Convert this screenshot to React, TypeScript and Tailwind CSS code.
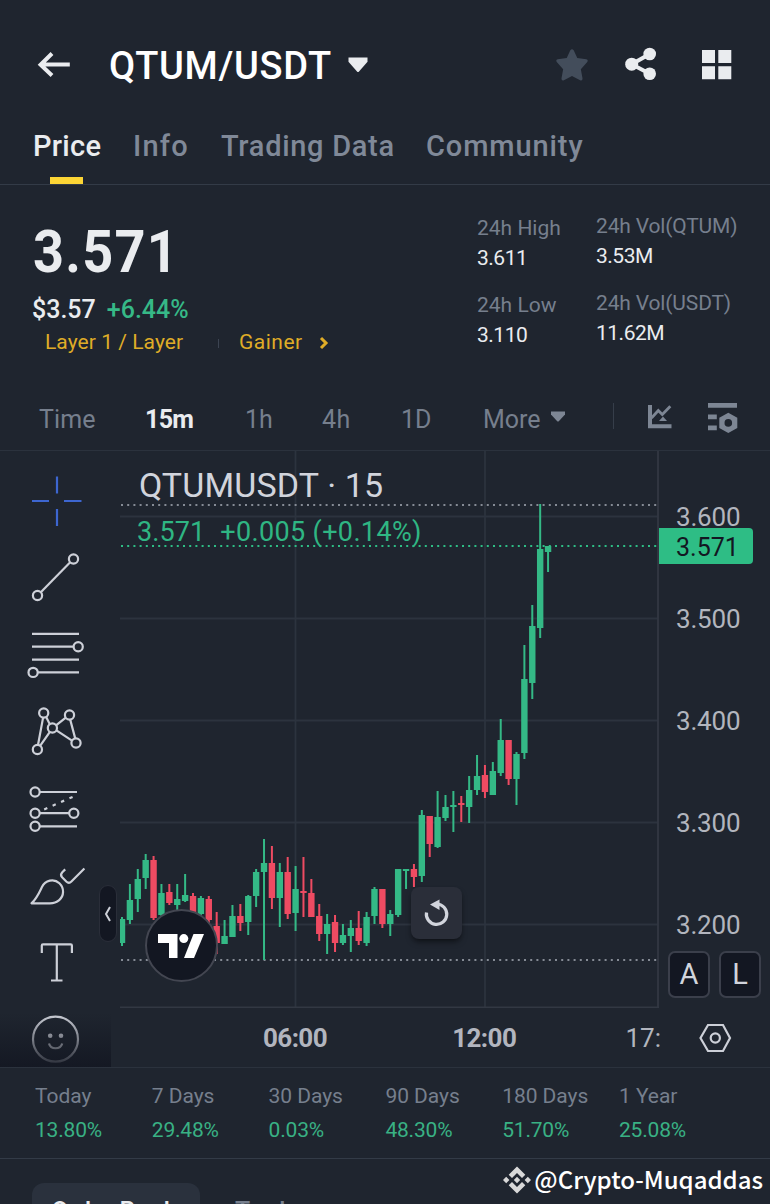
import { useState, type ReactNode } from "react";
import clsx from "clsx";

type Candle = [high: number, top: number, bottom: number, low: number, up: 0 | 1];

const tabs = [
  { name: "Price", className: "w-[100px] tracking-[0.3px]" },
  { name: "Info", className: "w-[88px] tracking-[1.2px]" },
  { name: "Trading Data", className: "w-[205px] tracking-[0.7px]" },
  { name: "Community", className: "w-[160px] tracking-[0.9px]" },
];

const intervals = [
  { name: "Time", className: "w-[106px] tracking-[0.1px]" },
  { name: "15m", className: "w-[100px] tracking-[-0.7px]" },
  { name: "1h", className: "w-[77px] tracking-[0px]" },
  { name: "4h", className: "w-[79px] tracking-[0.4px]" },
  { name: "1D", className: "w-[82px] tracking-[0px]" },
];

const stats = [
  [
    { label: "24h High", value: "3.611" },
    { label: "24h Low", value: "3.110" },
  ],
  [
    { label: "24h Vol(QTUM)", value: "3.53M" },
    { label: "24h Vol(USDT)", value: "11.62M" },
  ],
];

const performance = [
  { label: "Today", value: "13.80%" },
  { label: "7 Days", value: "29.48%" },
  { label: "30 Days", value: "0.03%" },
  { label: "90 Days", value: "48.30%" },
  { label: "180 Days", value: "51.70%" },
  { label: "1 Year", value: "25.08%" },
];

const priceLevels = ["3.600", "3.500", "3.400", "3.300", "3.200"];

const candles: Candle[] = [
  [917, 919, 943, 946, 1],
  [884, 900, 920, 924, 1],
  [869, 879, 899, 912, 1],
  [854, 860, 878, 889, 1],
  [856, 860, 918, 920, 0],
  [884, 893, 915, 930, 1],
  [884, 892, 903, 905, 0],
  [884, 899, 905, 910, 1],
  [874, 895, 901, 902, 1],
  [893, 896, 915, 925, 0],
  [896, 898, 914, 930, 1],
  [896, 899, 920, 930, 0],
  [912, 926, 943, 954, 0],
  [920, 936, 944, 944, 1],
  [905, 916, 937, 937, 1],
  [904, 916, 923, 931, 0],
  [895, 896, 922, 935, 1],
  [869, 872, 896, 907, 1],
  [839, 863, 872, 960, 1],
  [846, 863, 898, 909, 0],
  [863, 872, 898, 927, 1],
  [857, 872, 914, 919, 0],
  [866, 889, 913, 931, 1],
  [857, 891, 893, 917, 0],
  [879, 893, 917, 917, 0],
  [904, 916, 934, 941, 0],
  [914, 924, 934, 954, 1],
  [915, 922, 943, 952, 0],
  [924, 935, 943, 945, 1],
  [920, 928, 936, 952, 1],
  [911, 928, 941, 945, 0],
  [912, 917, 943, 946, 1],
  [887, 889, 916, 924, 1],
  [889, 889, 924, 928, 0],
  [910, 914, 924, 936, 1],
  [869, 869, 915, 917, 1],
  [869, 869, 871, 889, 1],
  [864, 869, 877, 887, 0],
  [810, 815, 876, 882, 1],
  [816, 816, 844, 857, 0],
  [791, 817, 847, 848, 1],
  [795, 807, 818, 821, 1],
  [791, 805, 807, 832, 1],
  [796, 803, 805, 822, 0],
  [776, 790, 807, 823, 1],
  [755, 776, 790, 795, 1],
  [765, 775, 792, 798, 0],
  [762, 771, 795, 795, 1],
  [719, 740, 773, 776, 1],
  [740, 740, 779, 785, 0],
  [752, 754, 779, 805, 1],
  [645, 679, 753, 759, 1],
  [605, 626, 683, 699, 1],
  [504, 549, 628, 638, 1],
  [546, 546, 552, 572, 1],
];

const tools: Array<{ name: string; icon: ReactNode }> = [
  {
    name: "Crosshair",
    icon: <path stroke="#3d66d0" d="M57 13.5v17M57 46v17M32 38h17M64 38h17.5" />,
  },
  {
    name: "Trend line",
    icon: (
      <>
        <circle cx="73.5" cy="19" r="4.6" />
        <circle cx="37.5" cy="55.5" r="4.6" />
        <path d="M70.2 22.3 40.8 52.2" />
      </>
    ),
  },
  {
    name: "Fib retracement",
    icon: (
      <>
        <path d="M32 16.8h47M32 29.7h41.5M32 42.6h47M37.7 55.4H79" />
        <circle cx="78.2" cy="29.7" r="4.6" />
        <circle cx="33.1" cy="55.4" r="4.6" />
      </>
    ),
  },
  {
    name: "Pattern",
    icon: (
      <>
        <circle cx="43.7" cy="19" r="4.6" />
        <circle cx="69.5" cy="21" r="4.6" />
        <circle cx="52.4" cy="34" r="4.6" />
        <circle cx="37.4" cy="55.5" r="4.6" />
        <circle cx="76" cy="49" r="4.6" />
        <path d="M43.1 23.6 38 51M46.2 22.9l3.6 7.3M65.8 23.6 56 31.4M49.9 37.9 40.1 51.8M56.4 36.4 72 46.6M70.2 25.6l5 18.8" />
      </>
    ),
  },
  {
    name: "Forecast",
    icon: (
      <>
        <circle cx="35.1" cy="21" r="4.6" />
        <circle cx="35.1" cy="42.2" r="4.6" />
        <circle cx="73.8" cy="42.2" r="4.6" />
        <circle cx="35.1" cy="55.3" r="4.6" />
        <path d="M39.7 21H77M39.7 42.2h29.5M39.7 55.3H77" />
        <path strokeDasharray="3.4 5.8" d="M44.2 38.4 74 25.3" />
      </>
    ),
  },
  {
    name: "Brush",
    icon: (
      <path
        strokeLinejoin="round"
        d="M31.5 55.3c5.2-4.7 7.6-10.4 10.3-16 3.4-7 12-9.3 17.6-4 5 4.9 4.8 12.4-.2 16.8-2.8 2.4-5.6 3.2-9.3 3.2zM65.2 21.4l-2.9 2.9c-1.5 1.6-1.7 3.4-.2 5l4.2 4.2c1.6 1.5 3.5 1.6 5.1 0L84.4 20.5"
      />
    ),
  },
  {
    name: "Text",
    icon: <path strokeLinejoin="round" d="M41.8 28v-7.5q0-1.2 1.2-1.2h27.7q1.2 0 1.2 1.2V28M56.8 19.3v36.2M51 55.5h11.5" />,
  },
  {
    name: "Emoji",
    icon: (
      <>
        <circle cx="55.5" cy="37.2" r="22.5" />
        <circle cx="50.2" cy="33.8" r="1.2" />
        <circle cx="61" cy="33.8" r="1.2" />
        <path d="M49 41.5c1.6 6.3 11.5 6.3 13.2 0" />
      </>
    ),
  },
];

function Header() {
  return (
    <header className="flex h-[131px] items-center pl-[37px]">
      <svg className="h-8 w-[34px] -translate-y-px" viewBox="0 0 34 32" fill="none" stroke="#eaecef" strokeWidth="4">
        <path d="M3.5 15.5h29.3M15 4.5 3.6 15.7 15 26.5" />
      </svg>
      <h1 className="ml-[38px] w-[238px] pt-[2px] text-[38px] font-medium tracking-[0.7px] text-white">QTUM/USDT</h1>
      <svg className="h-4 w-[22px] -translate-y-px" viewBox="0 0 22 16" fill="#eaecef">
        <path d="M1.5.5h19v4.2L12 14.5q-1 1-2 0L1.5 4.7z" />
      </svg>
      <svg className="ml-[187px] h-[32px] w-[32px] -translate-y-px" viewBox="0 0 34 34" fill="#434d5b">
        <path d="M15.2 1.2q1.8-2 3.6 0l3.8 8.4 9.6 1.4q2.4.8 1 2.8l-6.8 7.6 1.8 10q0 2.6-2.6 1.8L17 28.8l-8.6 4.4q-2.6.8-2.6-1.8l1.8-10L.8 13.8q-1.4-2 1-2.8l9.6-1.4z" />
      </svg>
      <svg className="ml-[36px] h-[34px] w-[34px] -translate-y-[2px]" viewBox="0 0 34 34" fill="#eaecef">
        <circle cx="7.7" cy="17.2" r="6.5" />
        <circle cx="25.7" cy="7" r="6.3" />
        <circle cx="25.7" cy="26.8" r="6.3" />
        <path d="M25.7 7 7.7 17.2l18 9.6" fill="none" stroke="#eaecef" strokeWidth="4" />
      </svg>
      <svg className="ml-[44px] h-[30px] w-[30px] -translate-y-px" viewBox="0 0 30 30" fill="#eaecef">
        <path d="M0 0h13v13H0zM16.3 0h13v13h-13zM0 16.3h13v13H0zM16.3 16.3h13v13h-13z" />
      </svg>
    </header>
  );
}

function Tabs() {
  const [active, setActive] = useState("Price");

  return (
    <nav className="flex h-[54px] border-b border-[#333b47] pl-[33px]">
      {tabs.map((tab) => (
        <button
          key={tab.name}
          type="button"
          onClick={() => setActive(tab.name)}
          className={clsx(
            "flex flex-col items-start text-left text-[29px] leading-[30px] font-medium whitespace-nowrap",
            tab.className,
            tab.name === active ? "text-[#eaecef]" : "text-[#808998]",
          )}
        >
          <span>{tab.name}</span>
          {tab.name === active ? <span className="mt-[16px] ml-[17px] h-[7px] w-[33px] bg-[#fcd535]" /> : null}
        </button>
      ))}
    </nav>
  );
}

function Ticker() {
  return (
    <section className="flex h-[200px]">
      <div className="w-[477px] pt-[34px] pl-[32px]">
        <p className="ml-px h-[66px] origin-left scale-x-[0.9] text-[60px] leading-[66px] font-bold tracking-[1.4px] text-[#eaecef]">
          3.571
        </p>
        <p className="mt-[9px] flex h-[32px] gap-[11px] text-[25px] leading-[32px] font-medium">
          <span className="text-[#eaecef]">$3.57</span>
          <span className="text-[#36b987]">+6.44%</span>
        </p>
        <div className="ml-[13px] flex h-[34px] items-center text-[21px] text-[#dfac27]">
          <span className="w-[173px] tracking-[0.05px]">Layer 1 / Layer</span>
          <span className="h-[9px] w-px bg-[#3c4452]" />
          <span className="ml-[20px] w-[80px] tracking-[0.5px]">Gainer</span>
          <svg className="h-4 w-3" viewBox="0 0 12 16" fill="none" stroke="#dfac27" strokeWidth="3">
            <path d="m2 3 5 5-5 5" />
          </svg>
        </div>
      </div>
      {stats.map((column, index) => (
        <dl key={index} className={index === 0 ? "w-[119px] pt-[28px]" : "pt-[26px]"}>
          {column.map((item) => (
            <div key={item.label} className="mb-[17px] text-[21px] leading-[30px] whitespace-nowrap">
              <dt className={clsx("text-[#767f8d]", index === 0 ? "tracking-[0px]" : "tracking-[-0.15px]")}>{item.label}</dt>
              <dd className="tracking-[-0.5px] text-[#eaecef]">{item.value}</dd>
            </div>
          ))}
        </dl>
      ))}
    </section>
  );
}

function IntervalBar() {
  const [active, setActive] = useState("15m");

  return (
    <div className="flex h-[66px] items-center border-b border-[#2b323d] pl-[39px] text-[25px] text-[#767f8d]">
      {intervals.map((interval) => (
        <button
          key={interval.name}
          type="button"
          onClick={() => setActive(interval.name)}
          className={clsx(
            "pt-[4px] text-left",
            interval.className,
            interval.name === active && "font-bold text-[#eaecef]",
          )}
        >
          {interval.name}
        </button>
      ))}
      <span className="w-[68px] pt-[4px]">More</span>
      <svg className="h-[11px] w-[14px] -translate-y-px" viewBox="0 0 14 11" fill="#7d8694">
        <path d="M0 .5h14v3L8 10q-1 1-2 0L0 3.5z" />
      </svg>
      <span className="ml-[48px] h-[26px] w-px -translate-y-[2px] bg-[#363e4a]" />
      <svg className="ml-[34px] h-[25px] w-[24px] -translate-y-px" viewBox="0 0 24 25" fill="none" stroke="#7d8694">
        <path strokeWidth="4" d="M2 1v21.2h21.5" />
        <path strokeWidth="2.8" d="m3.5 14 6.8-7.5 4 4 8-8.200" />
        <path fill="#7d8694" stroke="none" d="m15 12.5 4 4.5h-8z" />
      </svg>
      <svg className="ml-[35px] h-[32px] w-[31px]" viewBox="0 0 31 32" fill="#7d8694">
        <path d="M1 1h29v4.7H1zM1 12.5h8.8v4.7H1zM1 23.5h8.8v4.8H1z" />
        <path fillRule="evenodd" d="m21.3 10.8 9 5v10.1l-9 5.1-9-5.1V15.8zm0 6.3a3.8 3.8 0 1 0 0 7.6 3.8 3.8 0 1 0 0-7.6z" />
      </svg>
    </div>
  );
}

function Toolbar() {
  return (
    <aside className="relative h-[616px] w-[120px] shrink-0">
      <div className="flex h-full w-[111px] flex-col overflow-hidden pt-[12px]">
        {tools.map((tool) => (
          <svg
            key={tool.name}
            className="h-[77px] w-[111px] shrink-0"
            viewBox="0 0 111 77"
            fill="none"
            stroke="#cdd0d8"
            strokeWidth="2.2"
            aria-label={tool.name}
          >
            {tool.icon}
          </svg>
        ))}
      </div>
      <div className="absolute bottom-0 left-0 h-[54px] w-[111px] bg-gradient-to-b from-[#131722]/0 to-[#131722]/90" />
      <div className="absolute top-[434px] left-[99px] flex h-[57px] w-[18px] items-center justify-center rounded-full border border-[#2a2e39] bg-[#131722]">
        <svg className="h-4 w-2" viewBox="0 0 8 16" fill="none" stroke="#cdd0d8" strokeWidth="2">
          <path d="M6 1 2 8l4 7" />
        </svg>
      </div>
    </aside>
  );
}

function CandleChart() {
  return (
    <svg className="h-[557px] w-[539px]" viewBox="120 451 539 557">
      <path
        d="M120 516.5H658M120 618.5H658M120 720.5H658M120 822.5H658M120 924.5H658M295.5 451V1008M485 451V1008"
        stroke="#2c333e"
        strokeWidth="1.8"
      />
      <path d="M120 1007.5H659M658 451V1008" stroke="#323843" strokeWidth="1.8" />
      <path d="M121 505H657M121 960H657" stroke="#858b95" strokeWidth="2" strokeDasharray="2 4.2" />
      <path d="M121 546H657" stroke="#2ebd85" strokeWidth="2" strokeDasharray="2 4.2" />
      {candles.map(([high, top, bottom, low, up], index) => {
        const x = 122 + index * 7.89;

        return (
          <g key={index} fill={up ? "#34b986" : "#ee4b62"}>
            <rect x={x - 1} y={high} width="2" height={low - high} />
            <rect x={x - 3.2} y={top} width="6.4" height={bottom - top} />
          </g>
        );
      })}
    </svg>
  );
}

function ChartPanel() {
  return (
    <section className="flex h-[617px] border-b border-[#2b323d]">
      <Toolbar />
      <div className="relative w-[539px]">
        <CandleChart />
        <div className="flex h-[59px] w-[541px] items-center overflow-hidden pt-[2px] pl-[143px] text-[26px] text-[#b2b5be]">
          <span className="w-[190px] font-bold tracking-[-0.6px]">06:00</span>
          <span className="w-[174px] font-bold tracking-[-0.6px]">12:00</span>
          <span className="shrink-0">17:</span>
        </div>
        <div className="absolute top-[13px] left-[19px] whitespace-nowrap">
          <p className="text-[34px] leading-[42px] tracking-[0.15px] text-[#d1d4dc]">QTUMUSDT · 15</p>
          <p className="-ml-[2px] flex gap-[15px] pt-[2px] text-[27px] leading-[48px] text-[#2fb683]">
            <span className="tracking-[0.1px]">3.571</span>
            <span className="tracking-[0.35px]">+0.005 (+0.14%)</span>
          </p>
        </div>
        <div className="absolute top-[458px] left-[25px] flex h-[73px] w-[73px] items-center justify-center rounded-full border-2 border-[#434651] bg-[#131722]">
          <svg className="h-6 w-[48px] -translate-x-px" viewBox="0 0 48 24" fill="#fff">
            <path d="M1 0h19.5v24H12V9H1z" />
            <circle cx="26.8" cy="4.6" r="4.5" />
            <path d="M36.5 0H47L37 24H27z" />
          </svg>
        </div>
        <button
          type="button"
          aria-label="Reset chart"
          className="absolute top-[436px] left-[291px] flex h-[52px] w-[51px] items-center justify-center rounded-lg bg-[#2a2e39] shadow-md shadow-black/40"
        >
          <svg className="h-7 w-7" viewBox="0 0 28 28" fill="none" stroke="#d1d4dc" strokeWidth="3.2">
            <path d="M3.5 13.5a10.200 10.200 0 1 0 10.200-8.500" />
            <path fill="#d1d4dc" stroke="none" d="m7 5.500 9.500-5v10.500z" />
          </svg>
        </button>
      </div>
      <div className="relative w-[111px] pt-[15px]">
        {priceLevels.map((level) => (
          <p key={level} className="h-[102px] pl-[17px] text-[26px] leading-[103px] tracking-[-0.2px] text-[#b2b5be]">
            {level}
          </p>
        ))}
        <div className="absolute top-[77px] left-0 h-[36px] w-[94px] rounded-r-[4px] bg-[#2ebd85] pl-[17px] text-[25px] leading-[39px] text-[#131722]">
          3.571
        </div>
        <div className="-mt-[25px] flex gap-[9px] pl-[9px] text-[29px] text-[#d1d4dc]">
          <button type="button" className="h-[47px] w-[42px] rounded-[7px] border-2 border-[#3b3f4b] bg-[#131722] leading-[43px]">
            A
          </button>
          <button type="button" className="h-[47px] w-[42px] rounded-[7px] border-2 border-[#3b3f4b] bg-[#131722] leading-[43px]">
            L
          </button>
        </div>
        <svg className="mt-[24px] ml-[39px] h-[32px] w-[34px]" viewBox="0 0 34 32" fill="none" stroke="#cdd0d8" strokeWidth="2.2">
          <path d="M10 3h15l7 13-7 13H10L2.5 16z" />
          <circle cx="17.3" cy="16" r="4.6" />
        </svg>
      </div>
    </section>
  );
}

function Performance() {
  return (
    <section className="flex h-[91px] border-b border-[#333b47] pt-[12px] pl-[35px]">
      {performance.map((item) => (
        <div key={item.label} className="w-[116.8px] shrink-0 whitespace-nowrap">
          <p className="text-[21px] leading-[32px] tracking-[-0.05px] text-[#767f8d]">{item.label}</p>
          <p className="text-[21px] leading-[37px] tracking-[-0.2px] text-[#39b184]">{item.value}</p>
        </div>
      ))}
    </section>
  );
}

function Footer() {
  return (
    <footer className="relative flex h-[45px] items-start overflow-hidden pt-[24px] text-[25px] leading-[30px] font-medium">
      <button type="button" className="ml-[32px] h-[60px] w-[168px] shrink-0 rounded-[12px] bg-[#2a313d] pr-[4px] pb-[2px] text-[#eaecef]">
        Order Book
      </button>
      <button type="button" className="ml-[35px] h-[60px] pb-[2px] text-[#767f8d]">
        Trades
      </button>
      <div className="absolute top-[3px] right-[7px] flex h-[36px] items-center gap-[3px] whitespace-nowrap">
        <svg className="h-7 w-7" viewBox="0 0 28 28" fill="#d8d8d8">
          <path d="m14 .5 8.3 8.3L19 12l-5-5-5 5-3.3-3.2zM14 27.5l8.3-8.3L19 16l-5 5-5-5-3.3 3.2zM14 10.8l3.2 3.2-3.2 3.2-3.2-3.2zM3.2 10.8 6.4 14l-3.2 3.2L0 14zM24.8 10.8 28 14l-3.2 3.2-3.2-3.2z" />
        </svg>
        <span className="-translate-y-px font-['Noto_Sans_CJK_SC',sans-serif] text-[24px] font-medium text-white">@Crypto-Muqaddas</span>
      </div>
    </footer>
  );
}

export default function App() {
  return (
    <main className="h-[1204px] w-[770px] overflow-hidden bg-[#1f252f] font-[Roboto,sans-serif]">
      <Header />
      <Tabs />
      <Ticker />
      <IntervalBar />
      <ChartPanel />
      <Performance />
      <Footer />
    </main>
  );
}
